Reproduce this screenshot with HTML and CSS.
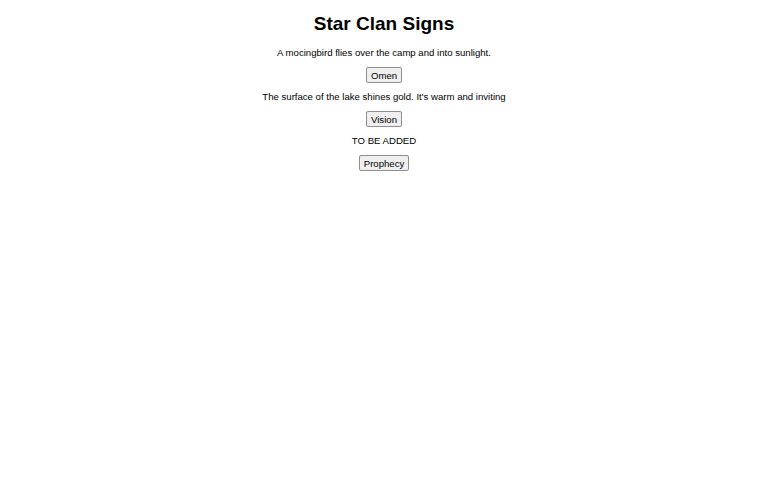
FILE: index.html
```html
<!DOCTYPE html>
<html lang="en">
<head>
  <meta charset="UTF-8" />
  <title>Star Clan Signs</title>
  <link rel="stylesheet" href="styles.css">
</head>
<body>
  <h1>Star Clan Signs</h1>

  <p id="omen">A mocingbird flies over the camp and into sunlight.</p>
  <button onclick="showSign('omen')">Omen</button>

  <p id="vision">The surface of the lake shines gold. It's warm and inviting</p>
  <button onclick="showSign('vision')">Vision</button>

  <p id="prophecy">TO BE ADDED</p>
  <button onclick="showSign('prophecy')">Prophecy</button>

  <script>
    function showSign(id) {
      const el = document.getElementById(id);
      el.style.fontWeight = el.style.fontWeight === "bold" ? "" : "bold";
    }
  </script>
</body>
</html>
```

FILE: styles.css
```css
body {
  margin: 9px 8px 8px;
  text-align: center;
  font-family: "Liberation Sans", Arial, sans-serif;
  font-size: 9.6px;
  color: #000;
  background: #fff;
}

h1 {
  font-size: 19px;
  margin: 4px 0 12px;
}

p {
  margin: 8px 0 9px;
}

button {
  font-family: "Liberation Sans", Arial, sans-serif;
  font-size: 9.6px;
  padding: 2px 4px 1px;
  background: #efefef;
  border: 1px solid #8f8f8f;
  border-radius: 2px;
  color: #000;
}
```
